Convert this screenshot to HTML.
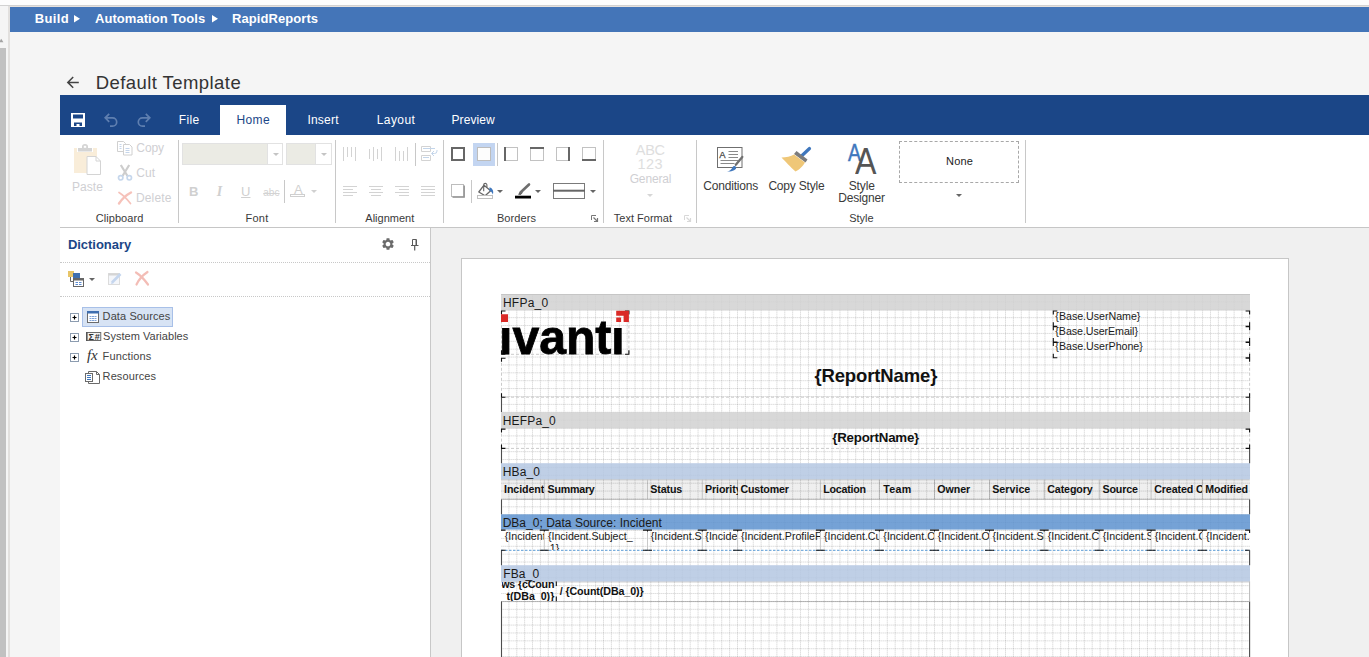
<!DOCTYPE html>
<html lang="en">
<head>
<meta charset="utf-8">
<title>Default Template</title>
<style>
html,body{margin:0;padding:0;}
body{width:1369px;height:657px;overflow:hidden;background:#f5f5f5;position:relative;
  font-family:"Liberation Sans",Arial,sans-serif;font-size:12px;color:#444;}
.a{position:absolute;}
.t{position:absolute;white-space:nowrap;line-height:1;}
svg{position:absolute;overflow:visible;}
/* top chrome */
#topwhite{left:0;top:0;width:1369px;height:5px;background:#fdfdfd;}
#topline{left:0;top:5px;width:1369px;height:1px;background:#d2d2d2;}
#topline2{left:10px;top:6px;width:1359px;height:1px;background:#e6e1dd;}
#leftbar{left:0;top:6px;width:8px;height:651px;background:#f5f5f5;}
#leftline{left:8px;top:6px;width:2px;height:651px;background:#e2e0de;}
#thumb{left:0;top:48px;width:6px;height:609px;background:#c1c1c1;}
#crumb{left:10px;top:7px;width:1359px;height:25px;background:#4475b8;}
.cr{top:12px;font-weight:bold;font-size:13px;color:#fff;}
/* title */
#title{left:96px;top:73px;font-size:18px;color:#333;}
/* ribbon */
#rib{left:60px;top:95px;width:1309px;height:40px;background:#1b4687;}
#ribbody{left:60px;top:135px;width:1309px;height:92px;background:#fff;}
#ribline{left:60px;top:227px;width:1309px;height:1px;background:#c6c6c6;}
#hometab{left:220px;top:105px;width:66px;height:30px;background:#fff;}
.tab{top:113px;font-size:12px;color:#fff;}
.sep{width:1px;background:#c8c8c8;top:140px;height:83px;}
.gl{top:212px;font-size:12px;color:#444;}
.dis{color:#bdbdbd;}
.arr{width:0;height:0;border:3px solid transparent;border-top:3px solid #666;border-bottom:none;}
/* left panel */
#panel{left:60px;top:228px;width:370px;height:429px;background:#fff;}
#panelr{left:430px;top:228px;width:1px;height:429px;background:#c8c8c8;}
#design{left:431px;top:228px;width:938px;height:429px;background:#f0f0f0;}
#page{left:461px;top:258px;width:826px;height:410px;background:#fff;border:1px solid #c6c6c6;}
.dot{height:0;border-top:1px dotted #c8c8c8;left:60px;width:370px;}
.tree{font-size:11px;color:#444;}
</style>
</head>
<body>
<div class="a" id="topwhite"></div>
<div class="a" id="topline"></div>
<div class="a" id="leftbar"></div>
<div class="a" id="leftline"></div>
<div class="a" id="topline2"></div>
<div class="a" id="thumb"></div>
<div class="a" id="crumb"></div>



<svg style="left:0;top:0" width="240" height="95" viewBox="0 0 240 95">
 <path d="M74 15v7.600l6-3.800zM212 15v7.600l6-3.800z" fill="#fff"/>
 <path d="M-1 42.200 1.200 38.800 3.400 42.200z" fill="#a3a3a3"/>
 <path d="M78.800 82.400H68M73.200 77 67.800 82.400 73.200 87.800" fill="none" stroke="#444" stroke-width="1.500"/>
</svg>
<div class="a" id="rib"></div>
<div class="a" id="ribbody"></div>
<div class="a" id="ribline"></div>
<div class="a" id="hometab"></div>

<!-- ribbon quick icons -->
<svg style="left:70px;top:112px" width="16" height="16" viewBox="0 0 16 16"><path d="M1 1h14v14H1z M3 2.5v4h10v-4z M4 10.5v3.5h2.5v-2h3v2H12v-3.500z" fill="#fff" fill-rule="evenodd"/></svg>
<svg style="left:103px;top:112px" width="16" height="16" viewBox="0 0 16 16" fill="none" stroke="#5f7fb0" stroke-width="1.7"><path d="M6.200 1.800 2.200 5.800l4 4M2.500 5.800h7a4.200 4.200 0 0 1 0 8.400h-2.500"/></svg>
<svg style="left:136px;top:112px" width="16" height="16" viewBox="0 0 16 16" fill="none" stroke="#5f7fb0" stroke-width="1.7"><path d="M9.800 1.800l4 4-4 4M13.500 5.800h-7a4.200 4.200 0 0 0 0 8.400h2.500"/></svg>

<!-- Clipboard group -->
<svg style="left:73px;top:144px" width="29" height="32" viewBox="0 0 29 32">
 <rect x="1" y="4" width="23" height="25" fill="#f9edd9"/>
 <rect x="4" y="3" width="16" height="5" fill="#fff"/>
 <path d="M5 4h4v-1.500a3 2.500 0 0 1 6 0V4h4v3.500H5z" fill="#d4d4d4"/><rect x="10.800" y="1.800" width="2.400" height="2" fill="#fff"/>
 <path d="M14 12.500h9l4.500 4.500v13.500H14z" fill="#fff" stroke="#d4d4d4"/>
 <path d="M23 12.500v4.500h4.500" fill="none" stroke="#d4d4d4"/>
</svg>
<svg style="left:117px;top:140px" width="16" height="16" viewBox="0 0 16 16" fill="#fff" stroke="#d0d0d0">
 <path d="M.5 1.500h6l2 2v8h-8z"/><path d="M6.500 4.500h6l2.500 2.500v8h-8.500z"/>
 <path d="M8.500 8.500h4M8.500 10.500h4M8.500 12.500h4M2.500 4.500h2M2.500 6.500h2M2.500 8.500h2" stroke="#c5d5ea"/>
</svg>
<svg style="left:117px;top:164px" width="16" height="17" viewBox="0 0 16 17" fill="none">
 <path d="M3.800 1l6.700 11M12.200 1 5.500 12" stroke="#cdcdcd" stroke-width="2.200"/>
 <circle cx="3.700" cy="13.800" r="2.200" stroke="#c6d7ec" stroke-width="1.700"/><circle cx="12.300" cy="13.800" r="2.200" stroke="#c6d7ec" stroke-width="1.700"/>
</svg>
<svg style="left:117px;top:191px" width="16" height="14" viewBox="0 0 16 14" fill="none" stroke="#f6c2ba" stroke-linecap="round">
 <path d="M2 1.500C6 4 10 8 13.500 12.500" stroke-width="1.700"/><path d="M14 1.500C9 4 5 8 2 12.500" stroke-width="2.400"/>
</svg>
<div class="a sep" style="left:178px"></div>

<!-- Font group -->
<div class="a" style="left:182px;top:143px;width:101px;height:22px;background:#ebebe4;border:1px solid #e2e2e2;box-sizing:border-box"></div>
<div class="a" style="left:267px;top:144px;width:14px;height:20px;background:#fff;border-left:1px solid #e2e2e2"></div>
<div class="a" style="left:286px;top:143px;width:46px;height:22px;background:#ebebe4;border:1px solid #e2e2e2;box-sizing:border-box"></div>
<div class="a" style="left:315px;top:144px;width:15px;height:20px;background:#fff;border-left:1px solid #e2e2e2"></div>
<div class="a arr" style="left:273px;top:153px;border-top-color:#c4c4c4"></div>
<div class="a arr" style="left:321px;top:153px;border-top-color:#c4c4c4"></div>
<div class="a" style="left:284px;top:180px;width:1px;height:23px;background:#c8c8c8"></div>
<div class="a" style="left:290px;top:194px;width:15px;height:3px;border:1px solid #cfcfcf;box-sizing:border-box;background:#fff"></div>
<div class="a arr" style="left:311px;top:190px;border-top-color:#d0d0d0"></div>
<div class="a sep" style="left:335px"></div>

<!-- Alignment group -->
<svg style="left:343px;top:147px" width="96" height="15" viewBox="0 0 96 15" stroke="#d3d3d3" fill="none">
 <path d="M.5 0v14M4.500 0v10M8.500 0v10M12.500 0v14"/>
 <path d="M26.500 2v10M30.500 0v14M34.500 2v10M38.500 0v14"/>
 <path d="M52.500 0v14M56.500 4v10M60.500 4v10M64.500 0v14"/>
</svg>
<div class="a" style="left:415px;top:143px;width:1px;height:23px;background:#c8c8c8"></div>
<svg style="left:421px;top:145px" width="17" height="17" viewBox="0 0 17 17" fill="none">
 <path d="M.500 1.500h9v5h-9zM.500 10.500h9v5h-9z" stroke="#d3d3d3"/>
 <path d="M2 3.500h12M2 12.500h6M11 8.500h2.500a2.500 2.500 0 0 0 2.500-2.500V5M13 6l-2.500 2.500L13 11" stroke="#c3d5ea"/>
</svg>
<svg style="left:343px;top:186px" width="96" height="11" viewBox="0 0 96 11" stroke="#d3d3d3" fill="none">
 <path d="M0 .5h14M0 3.500h10M0 6.500h14M0 9.500h10"/>
 <path d="M26 .5h14M28 3.500h10M26 6.500h14M28 9.500h10"/>
 <path d="M52 .5h14M56 3.500h10M52 6.500h14M56 9.500h10"/>
 <path d="M78 .5h14M78 3.500h14M78 6.500h14M78 9.500h14"/>
</svg>
<div class="a sep" style="left:443px"></div>

<!-- Borders group -->
<div class="a" style="left:473px;top:143px;width:22px;height:23px;background:#c3d5f1"></div>
<svg style="left:451px;top:147px" width="146" height="15" viewBox="0 0 146 15" fill="#fff">
 <rect x="1" y="1" width="12" height="12" stroke="#676767" stroke-width="2"/>
 <rect x="26.500" y=".5" width="13" height="13" stroke="#bdbdbd" fill="#fdfdfd"/>
 <rect x="53.500" y=".5" width="13" height="13" stroke="#c2c2c2"/><path d="M54 0v14" stroke="#676767" stroke-width="2"/>
 <rect x="79.500" y=".5" width="13" height="13" stroke="#c2c2c2"/><path d="M79 1h14" stroke="#676767" stroke-width="2"/>
 <rect x="105.500" y=".5" width="13" height="13" stroke="#c2c2c2"/><path d="M118 0v14" stroke="#676767" stroke-width="2"/>
 <rect x="131.500" y=".5" width="13" height="13" stroke="#c2c2c2"/><path d="M131 13h14" stroke="#676767" stroke-width="2"/>
</svg>
<div class="a" style="left:497px;top:143px;width:1px;height:23px;background:#c8c8c8"></div>
<svg style="left:451px;top:184px" width="15" height="15" viewBox="0 0 15 15"><rect x=".5" y=".5" width="12" height="12" fill="#fff" stroke="#bdbdbd"/><path d="M13.200 1.500v11.700H1.500" fill="none" stroke="#8a8a8a" stroke-width="1.300"/></svg>
<div class="a" style="left:471px;top:180px;width:1px;height:23px;background:#c8c8c8"></div>
<svg style="left:477px;top:183px" width="17" height="16" viewBox="0 0 17 16" fill="none">
 <path d="M7 2.200 1.800 9l6.300 3.800 5.600-5z" fill="#fff" stroke="#666" stroke-width="1.300" stroke-linejoin="round"/>
 <path d="M6.700 8.300V2a1.600 1.600 0 0 1 3.200 0v2.200" stroke="#666" stroke-width="1.100"/>
 <path d="M12.600 4.300c3 1 4.400 4 3.300 7.300-.7-2-1.900-3.300-3.700-4.100z" fill="#3f77bd"/>
 <rect x=".5" y="12.500" width="15" height="3" fill="#fff" stroke="#c0c0c0"/>
</svg>
<div class="a arr" style="left:497px;top:190px"></div>
<svg style="left:515px;top:183px" width="17" height="16" viewBox="0 0 17 16" fill="none">
 <path d="M3 11.500 5 9l3 .5L5.500 12z" fill="#555"/><path d="M5.500 9.500 14 1.500" stroke="#6e6e6e" stroke-width="2.600" stroke-linecap="round"/>
 <rect x="0" y="12.700" width="16" height="2.800" fill="#000"/>
</svg>
<div class="a arr" style="left:535px;top:190px"></div>
<svg style="left:553px;top:183px" width="33" height="16" viewBox="0 0 33 16" fill="none"><rect x=".5" y=".5" width="31" height="15" fill="#fff" stroke="#7a7a7a"/><path d="M0 7.700h32" stroke="#666" stroke-width="2"/></svg>
<div class="a arr" style="left:590px;top:190px"></div>
<svg style="left:591px;top:215px" width="8" height="8" viewBox="0 0 8 8" fill="none" stroke="#777"><path d="M.5 5V.5H5"/><path d="M2.500 2.500 6.500 6.500M6.500 3v3.500H3" stroke-width="1.200"/></svg>
<div class="a sep" style="left:603px"></div>
<!-- Text format group -->
<div class="a arr" style="left:647px;top:194px;border-top-color:#d6d6d6"></div>
<svg style="left:684px;top:215px" width="8" height="8" viewBox="0 0 8 8" fill="none" stroke="#d8d8d8"><path d="M.5 5V.5H5"/><path d="M2.500 2.500 6.500 6.500M6.500 3v3.500H3" stroke-width="1.200"/></svg>
<div class="a sep" style="left:696px"></div>
<!-- Style group -->
<svg style="left:717px;top:147px" width="30" height="26" viewBox="0 0 30 26" fill="none">
 <rect x=".5" y=".5" width="24.500" height="20" fill="#fff" stroke="#6f6f6f"/>
 <path d="M11.500 4.500h9.500M11.500 7.500h9.500M11.500 10.500h9.500M3.500 13.500h17.500M3.500 16.500h14" stroke="#8a8a8a"/>
 <text x="2.300" y="10.800" font-family="'Liberation Sans',Arial,sans-serif" font-size="9.500" fill="#444" stroke="#444" stroke-width=".25">A</text>
 <path d="M18.800 17.800 25.300 10" stroke="#707070" stroke-width="2.300" stroke-linecap="round"/>
 <path d="M10 24.500c3-.5 4.500-2 5.500-4.200 1-1.600 2.600-1.600 3.400-.6.800 1.200 0 2.800-1.800 3.600-2 .9-4.600 1.500-7.100 1.200z" fill="#3f77bd"/>
</svg>
<svg style="left:781px;top:147px" width="31" height="26" viewBox="0 0 31 26">
 <path d="M20 9.500 28.500 1.500" stroke="#3f77bd" stroke-width="3.200" stroke-linecap="round" fill="none"/>
 <path d="M15.500 4 26.500 12.500 24.500 15.500 13 7z" fill="#7c7c7c"/>
 <path d="M13 7.500 24 15.500C22 19 18 23 14.500 24.500 9.500 20 4 14 .5 10.500 5 10.500 10 9.500 13 7.500z" fill="#efc778"/>
</svg>
<div class="a" style="left:899px;top:141px;width:120px;height:42px;box-sizing:border-box;border:1px dashed #a8a8a8"></div>
<div class="a arr" style="left:956px;top:194px"></div>
<div class="a sep" style="left:1025px"></div>

<!-- Dictionary panel -->
<div class="a" id="panel"></div>
<div class="a" id="panelr"></div>
<div class="a dot" style="top:262px"></div>
<div class="a dot" style="top:296px"></div>
<svg style="left:380.500px;top:237.300px" width="14" height="14" viewBox="0 0 24 24"><path fill="#6b6b6b" d="M19.430 12.980c.04-.32.070-.64.070-.98s-.030-.66-.070-.98l2.110-1.650c.19-.15.240-.42.120-.64l-2-3.460c-.12-.22-.39-.3-.61-.22l-2.490 1c-.52-.4-1.080-.73-1.690-.98l-.38-2.650C14.460 2.180 14.250 2 14 2h-4c-.25 0-.46.180-.49.420l-.38 2.650c-.61.250-1.170.59-1.690.98l-2.490-1c-.23-.09-.49 0-.61.220l-2 3.460c-.13.220-.07.490.12.640l2.110 1.650c-.04.320-.07.650-.07.980s.03.660.07.980l-2.110 1.650c-.19.150-.24.420-.12.640l2 3.460c.12.220.39.300.61.220l2.490-1c.52.400 1.080.73 1.690.98l.38 2.650c.03.240.24.420.49.420h4c.25 0 .46-.18.490-.42l.38-2.650c.61-.25 1.170-.59 1.690-.98l2.490 1c.23.090.49 0 .61-.22l2-3.460c.12-.22.070-.49-.12-.64l-2.110-1.650zM12 16c-2.210 0-4-1.790-4-4s1.790-4 4-4 4 1.790 4 4-1.790 4-4 4z"/></svg>
<svg style="left:411px;top:239px" width="8" height="12" viewBox="0 0 8 12" fill="none" stroke="#5a5a5a"><path d="M1.500 6V.5h4V6M5 1v5" /><path d="M0 6.500h7.500M3.700 7v4.500" stroke-width="1.200"/></svg>
<!-- panel toolbar -->
<svg style="left:68px;top:271px" width="17" height="16" viewBox="0 0 17 16">
 <rect x="0" y="0" width="6" height="6" fill="#e8c568"/>
 <rect x="5" y="2" width="7" height="6" fill="#3f6fb0"/>
 <path d="M2.500 6v4.500h3" fill="none" stroke="#666"/>
 <rect x="5.500" y="7.500" width="10" height="8" fill="#fff" stroke="#666"/><rect x="5.500" y="7.500" width="10" height="2" fill="#666"/>
 <path d="M7.500 11.500h2.500M11 11.500h2.500M7.500 13.500h2.500M11 13.500h2.500" stroke="#5b8ad0"/>
</svg>
<div class="a arr" style="left:89px;top:278px"></div>
<svg style="left:108px;top:272px" width="15" height="14" viewBox="0 0 15 14" fill="none">
 <rect x=".5" y="1.500" width="11" height="11" fill="#f4f6fa" stroke="#dcdcdc"/><path d="M.5 2.500h11" stroke="#d5d5d5" stroke-width="2"/>
 <path d="M4 10.500 12.500 2" stroke="#c5d6ee" stroke-width="2.600"/><path d="M3 12l.8-2.500 1.700 1.700z" fill="#c5d6ee"/>
</svg>
<svg style="left:134px;top:271px" width="16" height="15" viewBox="0 0 16 15" fill="none" stroke="#f3bdb6" stroke-width="2.200" stroke-linecap="round"><path d="M2 1.500C6 4 10 8 14 13.500M13.500 1C9 4 5 8 2.500 13.500"/></svg>
<!-- tree -->
<div class="a" style="left:82px;top:307px;width:91px;height:20px;box-sizing:border-box;background:#d7e3f4;border:1px solid #a8c0e8"></div>
<svg style="left:70px;top:313px" width="10" height="50" viewBox="0 0 10 50" fill="#fff">
 <g stroke="#8c9cb0"><rect x=".5" y=".5" width="8" height="8"/><rect x=".5" y="20.500" width="8" height="8"/><rect x=".5" y="40.500" width="8" height="8"/></g>
 <path d="M2.500 4.500h4M4.500 2.500v4M2.500 24.500h4M4.500 22.500v4M2.500 44.500h4M4.500 42.500v4" stroke="#000" stroke-width="1.200"/>
</svg>
<svg style="left:87px;top:311px" width="12" height="12" viewBox="0 0 12 12"><rect x=".5" y=".5" width="11" height="11" fill="#fff" stroke="#6b6b6b"/><rect x="0" y="0" width="12" height="2.500" fill="#3f6fb0"/><path d="M2.500 5.500h2M5 5.500h2M7.500 5.500h2M2.500 7.500h2M5 7.500h2M7.500 7.500h2M2.500 9.500h2M5 9.500h2M7.500 9.500h2" stroke="#7fa3d8"/></svg>
<svg style="left:86px;top:332px" width="15" height="9" viewBox="0 0 15 9"><rect x=".75" y=".5" width="14" height="8" fill="#f2f2f2" stroke="#6b6b6b"/><path d="M.75 0v9" stroke="#555" stroke-width="1.500"/></svg>
<svg style="left:85px;top:369px" width="15" height="15" viewBox="0 0 15 15" fill="#fff" stroke="#6b6b6b"><path d="M3.500 2.500h8l3 3v9h-11z"/><path d="M11.500 2.500v3h3" fill="none"/><rect x=".5" y="4.500" width="7" height="8"/><path d="M2 6.500h4M2 8.500h4M2 10.500h4" stroke="#3f77bd"/></svg>

<div class="a" id="design"></div>
<div class="a" id="page"></div>
<svg style="left:0;top:0" width="1369" height="657" viewBox="0 0 1369 657"><rect x="501.00" y="479.30" width="749.00" height="20.10" fill="#efefef" /><path d="M544.3 479.3V499.4M647.5 479.3V499.4M702.3 479.3V499.4M737.6 479.3V499.4M820.4 479.3V499.4M879.4 479.3V499.4M934.5 479.3V499.4M989.5 479.3V499.4M1044.2 479.3V499.4M1099.2 479.3V499.4M1151.1 479.3V499.4M1202.4 479.3V499.4M501.0 499.4H1250.0M501.0 479.8H1249.6" stroke="#c4c4c4" fill="none"/><path d="M501.0 581.9H1249.6M501.0 601.6H1249.6" stroke="#c4c4c4" fill="none"/></svg>
<svg style="left:501px;top:294.300px" width="749" height="363" viewBox="0 0 749 363"><path d="M7.88 0V363M15.77 0V363M23.65 0V363M31.53 0V363M39.41 0V363M47.30 0V363M55.18 0V363M63.06 0V363M70.95 0V363M78.83 0V363M86.71 0V363M94.60 0V363M102.48 0V363M110.36 0V363M118.25 0V363M126.13 0V363M134.01 0V363M141.89 0V363M149.78 0V363M157.66 0V363M165.54 0V363M173.43 0V363M181.31 0V363M189.19 0V363M197.07 0V363M204.96 0V363M212.84 0V363M220.72 0V363M228.61 0V363M236.49 0V363M244.37 0V363M252.26 0V363M260.14 0V363M268.02 0V363M275.90 0V363M283.79 0V363M291.67 0V363M299.55 0V363M307.44 0V363M315.32 0V363M323.20 0V363M331.09 0V363M338.97 0V363M346.85 0V363M354.74 0V363M362.62 0V363M370.50 0V363M378.38 0V363M386.27 0V363M394.15 0V363M402.03 0V363M409.92 0V363M417.80 0V363M425.68 0V363M433.56 0V363M441.45 0V363M449.33 0V363M457.21 0V363M465.10 0V363M472.98 0V363M480.86 0V363M488.75 0V363M496.63 0V363M504.51 0V363M512.39 0V363M520.28 0V363M528.16 0V363M536.04 0V363M543.93 0V363M551.81 0V363M559.69 0V363M567.58 0V363M575.46 0V363M583.34 0V363M591.23 0V363M599.11 0V363M606.99 0V363M614.87 0V363M622.76 0V363M630.64 0V363M638.52 0V363M646.41 0V363M654.29 0V363M662.17 0V363M670.05 0V363M677.94 0V363M685.82 0V363M693.70 0V363M701.59 0V363M709.47 0V363M717.35 0V363M725.24 0V363M733.12 0V363M741.00 0V363M0 7.88H749M0 15.77H749M0 23.65H749M0 31.53H749M0 39.41H749M0 47.30H749M0 55.18H749M0 63.06H749M0 70.95H749M0 78.83H749M0 86.71H749M0 94.60H749M0 102.48H749M0 110.36H749M0 118.25H749M0 126.13H749M0 134.01H749M0 141.89H749M0 149.78H749M0 157.66H749M0 165.54H749M0 173.43H749M0 181.31H749M0 189.19H749M0 197.07H749M0 204.96H749M0 212.84H749M0 220.72H749M0 228.61H749M0 236.49H749M0 244.37H749M0 252.26H749M0 260.14H749M0 268.02H749M0 275.90H749M0 283.79H749M0 291.67H749M0 299.55H749M0 307.44H749M0 315.32H749M0 323.20H749M0 331.09H749M0 338.97H749M0 346.85H749M0 354.74H749M0 362.62H749" fill="none" stroke="#000" stroke-opacity="0.075" stroke-width="1"/><path d="M7.88 0V363M15.77 0V363M23.65 0V363M31.53 0V363M39.41 0V363M47.30 0V363M55.18 0V363M63.06 0V363M70.95 0V363M78.83 0V363M86.71 0V363M94.60 0V363M102.48 0V363M110.36 0V363M118.25 0V363M126.13 0V363M134.01 0V363M141.89 0V363M149.78 0V363M157.66 0V363M165.54 0V363M173.43 0V363M181.31 0V363M189.19 0V363M197.07 0V363M204.96 0V363M212.84 0V363M220.72 0V363M228.61 0V363M236.49 0V363M244.37 0V363M252.26 0V363M260.14 0V363M268.02 0V363M275.90 0V363M283.79 0V363M291.67 0V363M299.55 0V363M307.44 0V363M315.32 0V363M323.20 0V363M331.09 0V363M338.97 0V363M346.85 0V363M354.74 0V363M362.62 0V363M370.50 0V363M378.38 0V363M386.27 0V363M394.15 0V363M402.03 0V363M409.92 0V363M417.80 0V363M425.68 0V363M433.56 0V363M441.45 0V363M449.33 0V363M457.21 0V363M465.10 0V363M472.98 0V363M480.86 0V363M488.75 0V363M496.63 0V363M504.51 0V363M512.39 0V363M520.28 0V363M528.16 0V363M536.04 0V363M543.93 0V363M551.81 0V363M559.69 0V363M567.58 0V363M575.46 0V363M583.34 0V363M591.23 0V363M599.11 0V363M606.99 0V363M614.87 0V363M622.76 0V363M630.64 0V363M638.52 0V363M646.41 0V363M654.29 0V363M662.17 0V363M670.05 0V363M677.94 0V363M685.82 0V363M693.70 0V363M701.59 0V363M709.47 0V363M717.35 0V363M725.24 0V363M733.12 0V363M741.00 0V363M0 7.88H749M0 15.77H749M0 23.65H749M0 31.53H749M0 39.41H749M0 47.30H749M0 55.18H749M0 63.06H749M0 70.95H749M0 78.83H749M0 86.71H749M0 94.60H749M0 102.48H749M0 110.36H749M0 118.25H749M0 126.13H749M0 134.01H749M0 141.89H749M0 149.78H749M0 157.66H749M0 165.54H749M0 173.43H749M0 181.31H749M0 189.19H749M0 197.07H749M0 204.96H749M0 212.84H749M0 220.72H749M0 228.61H749M0 236.49H749M0 244.37H749M0 252.26H749M0 260.14H749M0 268.02H749M0 275.90H749M0 283.79H749M0 291.67H749M0 299.55H749M0 307.44H749M0 315.32H749M0 323.20H749M0 331.09H749M0 338.97H749M0 346.85H749M0 354.74H749M0 362.62H749" fill="none" stroke="#000" stroke-opacity="0.06" stroke-width="1" stroke-dasharray="1 1"/></svg>
<svg style="left:0;top:0" width="1369" height="657" viewBox="0 0 1369 657"><rect x="501.00" y="294.00" width="749.00" height="16.50" fill="#d1d1d1" fill-opacity="0.85"/><rect x="501.00" y="412.10" width="749.00" height="16.50" fill="#d1d1d1" fill-opacity="0.85"/><rect x="501.00" y="463.20" width="749.00" height="16.10" fill="#b4c7e2" fill-opacity="0.85"/><rect x="501.00" y="514.30" width="749.00" height="15.30" fill="#5d92cf" fill-opacity="0.85"/><rect x="501.00" y="565.20" width="749.00" height="16.20" fill="#b4c7e2" fill-opacity="0.85"/><path d="M501.0 294.5H1250.0" stroke="#c6c6c6"/><path d="M501.5 397.2V412.1M501.5 448.4V463.2M501.5 499.4V514.3M501.5 550.3V565.2M501.5 601.6V657M1249.6 397.2V412.1M1249.6 448.4V463.2M1249.6 499.4V514.3M1249.6 550.3V565.2M1249.6 601.6V657" stroke="#4d4d4d" stroke-width="1.100" fill="none"/><path d="M1249.6 581.4V601.6" stroke="#b9b9b9" fill="none"/><path d="M501.5 310.5V354.3M628.9 310.5V354.3M501 354.3H628.9M501.5 357.8V397.2M1249.6 357.8V397.2M501 397.2H1249.6M1249.6 310.5V326.3M1249.6 326.3V342.0M1249.6 342.0V357.8M501.5 428.6V448.4M1249.6 428.6V448.4M501 448.4H1249.6" stroke="#cbcbcb" stroke-dasharray="3 2" fill="none"/><path d="M544.3 529.6V550.3M647.5 529.6V550.3M702.3 529.6V550.3M737.6 529.6V550.3M820.4 529.6V550.3M879.4 529.6V550.3M934.5 529.6V550.3M989.5 529.6V550.3M1044.2 529.6V550.3M1099.2 529.6V550.3M1151.1 529.6V550.3M1202.4 529.6V550.3" stroke="#c9c9c9" fill="none"/><path d="M501.0 550.3H1249.6" stroke="#5b9bd5" stroke-dasharray="2.500 1.500" fill="none"/><path d="M501.5 314.5V311.0H505.5M624.9 311.0H628.9V314.5M501.5 350.3V354.3H505.5M624.9 354.3H628.9V350.3M501.5 361.8V358.3H505.5M1245.6 358.3H1249.6V361.8M501.5 393.2V397.2H505.5M1245.6 397.2H1249.6V393.2M1053.3 314.5V311.0H1057.3M1245.6 311.0H1249.6V314.5M1053.3 322.3V326.3H1057.3M1245.6 326.3H1249.6V322.3M1053.3 330.3V326.8H1057.3M1245.6 326.8H1249.6V330.3M1053.3 338.0V342.0H1057.3M1245.6 342.0H1249.6V338.0M1053.3 346.0V342.5H1057.3M1245.6 342.5H1249.6V346.0M1053.3 353.8V357.8H1057.3M1245.6 357.8H1249.6V353.8M501.5 432.6V429.1H505.5M1245.6 429.1H1249.6V432.6M501.5 444.4V448.4H505.5M1245.6 448.4H1249.6V444.4M539.8 530.1H548.8M539.8 550.3H548.8M544.3 529.6V531.5M643.0 530.1H652.0M643.0 550.3H652.0M647.5 529.6V531.5M697.8 530.1H706.8M697.8 550.3H706.8M702.3 529.6V531.5M733.1 530.1H742.1M733.1 550.3H742.1M737.6 529.6V531.5M815.9 530.1H824.9M815.9 550.3H824.9M820.4 529.6V531.5M874.9 530.1H883.9M874.9 550.3H883.9M879.4 529.6V531.5M930.0 530.1H939.0M930.0 550.3H939.0M934.5 529.6V531.5M985.0 530.1H994.0M985.0 550.3H994.0M989.5 529.6V531.5M1039.7 530.1H1048.7M1039.7 550.3H1048.7M1044.2 529.6V531.5M1094.7 530.1H1103.7M1094.7 550.3H1103.7M1099.2 529.6V531.5M1146.6 530.1H1155.6M1146.6 550.3H1155.6M1151.1 529.6V531.5M1197.9 530.1H1206.9M1197.9 550.3H1206.9M1202.4 529.6V531.5M501.0 530.1H505.5M501.0 550.3H505.5M1245.1 530.1H1249.6V533M1245.1 550.3H1249.6M556.3 581.4V586M556.3 596.6V601.3" stroke="#111" stroke-width="1.100" fill="none"/></svg>
<div class="t" style="left:34.79px;top:12.00px;font-size:13px;color:#fff;font-weight:bold;letter-spacing:0.338px;">Build</div>
<div class="t" style="left:95.10px;top:12.00px;font-size:13px;color:#fff;font-weight:bold;letter-spacing:0.034px;">Automation Tools</div>
<div class="t" style="left:231.99px;top:12.00px;font-size:13px;color:#fff;font-weight:bold;letter-spacing:0.074px;">RapidReports</div>
<div class="t" style="left:95.65px;top:74.00px;font-size:18.5px;color:#333;letter-spacing:0.438px;">Default Template</div>
<div class="t" style="left:178.75px;top:114.00px;font-size:12px;color:#fff;letter-spacing:0.346px;">File</div>
<div class="t" style="left:236.45px;top:114.00px;font-size:12px;color:#1b4687;letter-spacing:0.421px;">Home</div>
<div class="t" style="left:307.40px;top:114.00px;font-size:12px;color:#fff;letter-spacing:0.234px;">Insert</div>
<div class="t" style="left:376.75px;top:114.00px;font-size:12px;color:#fff;letter-spacing:0.401px;">Layout</div>
<div class="t" style="left:451.55px;top:114.00px;font-size:12px;color:#fff;letter-spacing:0.073px;">Preview</div>
<div class="t" style="left:72.05px;top:181.00px;font-size:12px;color:#cfcfd3;letter-spacing:0.022px;">Paste</div>
<div class="t" style="left:136.30px;top:142.00px;font-size:12px;color:#cfcfd3;letter-spacing:-0.071px;">Copy</div>
<div class="t" style="left:136.30px;top:167.00px;font-size:12px;color:#cfcfd3;letter-spacing:0.055px;">Cut</div>
<div class="t" style="left:135.95px;top:192.00px;font-size:12px;color:#cfcfd3;letter-spacing:0.157px;">Delete</div>
<div class="t" style="left:95.65px;top:213.00px;font-size:11px;color:#3a3a3a;letter-spacing:0.079px;">Clipboard</div>
<div class="t" style="left:245.40px;top:213.00px;font-size:11px;color:#3a3a3a;letter-spacing:0.315px;">Font</div>
<div class="t" style="left:365.30px;top:213.00px;font-size:11px;color:#3a3a3a;letter-spacing:0.005px;">Alignment</div>
<div class="t" style="left:496.90px;top:213.00px;font-size:11px;color:#3a3a3a;letter-spacing:0.106px;">Borders</div>
<div class="t" style="left:613.80px;top:213.00px;font-size:11px;color:#3a3a3a;letter-spacing:0.009px;">Text Format</div>
<div class="t" style="left:849.15px;top:213.00px;font-size:11px;color:#3a3a3a;letter-spacing:-0.009px;">Style</div>
<div class="t" style="left:189.09px;top:185.00px;font-size:13px;color:#d0d0d0;font-weight:bold;">B</div>
<div class="t" style="left:216.82px;top:185.00px;font-size:14px;color:#d0d0d0;font-weight:bold;font-family:'Liberation Serif',serif;font-style:italic;">I</div>
<div class="t" style="left:241.09px;top:185.00px;font-size:13px;color:#d0d0d0;text-decoration:underline;text-underline-offset:1px;">U</div>
<div class="t" style="left:263.20px;top:188.00px;font-size:10px;color:#d3d3d3;letter-spacing:0.113px;text-decoration:line-through;">abc</div>
<div class="t" style="left:293.90px;top:183.00px;font-size:13px;color:#d0d0d0;">A</div>
<div class="t" style="left:635.70px;top:143.00px;font-size:14.5px;color:#dedede;letter-spacing:-0.206px;">ABC</div>
<div class="t" style="left:637.59px;top:157.00px;font-size:14.5px;color:#dedede;letter-spacing:0.451px;">123</div>
<div class="t" style="left:629.70px;top:173.00px;font-size:12px;color:#cfcfd3;letter-spacing:-0.154px;">General</div>
<div class="t" style="left:703.30px;top:180.00px;font-size:12px;color:#3a3a3a;letter-spacing:-0.189px;">Conditions</div>
<div class="t" style="left:768.40px;top:180.00px;font-size:12px;color:#3a3a3a;letter-spacing:-0.189px;">Copy Style</div>
<div class="t" style="left:848.70px;top:180.00px;font-size:12px;color:#3a3a3a;letter-spacing:-0.088px;">Style</div>
<div class="t" style="left:838.15px;top:192.00px;font-size:12px;color:#3a3a3a;letter-spacing:-0.154px;">Designer</div>
<div class="t" style="left:946.10px;top:156.00px;font-size:11px;color:#222;letter-spacing:0.124px;">None</div>
<div class="t" style="left:847.90px;top:141.00px;font-size:24px;color:#3f77bd;-webkit-text-stroke:0.5px #3f77bd;transform:scaleX(0.806);transform-origin:0 0;">A</div>
<div class="t" style="left:854.80px;top:144.00px;font-size:36px;color:#555;transform:scaleX(0.893);transform-origin:0 0;">A</div>
<div class="t" style="left:67.89px;top:238.00px;font-size:13px;color:#1b4687;font-weight:bold;letter-spacing:-0.027px;">Dictionary</div>
<div class="t" style="left:102.60px;top:311.00px;font-size:11px;color:#444;letter-spacing:0.100px;">Data Sources</div>
<div class="t" style="left:103.05px;top:331.00px;font-size:11px;color:#444;letter-spacing:0.029px;">System Variables</div>
<div class="t" style="left:102.60px;top:351.00px;font-size:11px;color:#444;letter-spacing:0.133px;">Functions</div>
<div class="t" style="left:102.60px;top:371.00px;font-size:11px;color:#444;letter-spacing:0.109px;">Resources</div>
<div class="t" style="left:86.90px;top:348.00px;font-size:15px;color:#333;font-family:'Liberation Serif',serif;font-style:italic;">fx</div>
<div class="t" style="left:502.95px;top:297.00px;font-size:12px;color:#1a1a1a;letter-spacing:0.250px;">HFPa_0</div>
<div class="t" style="left:502.75px;top:415.00px;font-size:12px;color:#1a1a1a;letter-spacing:0.158px;">HEFPa_0</div>
<div class="t" style="left:502.75px;top:466.00px;font-size:12px;color:#1a1a1a;letter-spacing:0.146px;">HBa_0</div>
<div class="t" style="left:502.65px;top:517.00px;font-size:12px;color:#1a1a1a;letter-spacing:0.018px;">DBa_0; Data Source: Incident</div>
<div class="t" style="left:503.15px;top:568.00px;font-size:12px;color:#1a1a1a;letter-spacing:0.155px;">FBa_0</div>
<div class="t" style="left:1055.35px;top:311.00px;font-size:10.67px;color:#1a1a1a;letter-spacing:-0.020px;">{Base.UserName}</div>
<div class="t" style="left:1055.35px;top:326.00px;font-size:10.67px;color:#1a1a1a;letter-spacing:-0.060px;">{Base.UserEmail}</div>
<div class="t" style="left:1055.35px;top:341.00px;font-size:10.67px;color:#1a1a1a;letter-spacing:-0.012px;">{Base.UserPhone}</div>
<div class="t" style="left:814.41px;top:367.00px;font-size:18.5px;color:#111;font-weight:bold;letter-spacing:-0.131px;">{ReportName}</div>
<div class="t" style="left:832.29px;top:431.00px;font-size:13.3px;color:#111;font-weight:bold;letter-spacing:-0.221px;">{ReportName}</div>
<div class="a" style="left:502px;top:479.3px;width:42.30px;height:20.10px;overflow:hidden"><div class="t" style="left:2.10px;top:4.70px;font-size:10.67px;color:#111;font-weight:bold;letter-spacing:-0.100px;">Incident</div></div>
<div class="a" style="left:545.3px;top:479.3px;width:102.20px;height:20.10px;overflow:hidden"><div class="t" style="left:2.30px;top:4.70px;font-size:10.67px;color:#111;font-weight:bold;letter-spacing:-0.232px;">Summary</div></div>
<div class="a" style="left:648.5px;top:479.3px;width:53.80px;height:20.10px;overflow:hidden"><div class="t" style="left:1.70px;top:4.70px;font-size:10.67px;color:#111;font-weight:bold;letter-spacing:-0.095px;">Status</div></div>
<div class="a" style="left:703.3px;top:479.3px;width:34.30px;height:20.10px;overflow:hidden"><div class="t" style="left:1.70px;top:4.70px;font-size:10.67px;color:#111;font-weight:bold;letter-spacing:-0.100px;">Priority</div></div>
<div class="a" style="left:738.6px;top:479.3px;width:81.80px;height:20.10px;overflow:hidden"><div class="t" style="left:1.90px;top:4.70px;font-size:10.67px;color:#111;font-weight:bold;letter-spacing:-0.207px;">Customer</div></div>
<div class="a" style="left:821.4px;top:479.3px;width:58.00px;height:20.10px;overflow:hidden"><div class="t" style="left:1.90px;top:4.70px;font-size:10.67px;color:#111;font-weight:bold;letter-spacing:-0.248px;">Location</div></div>
<div class="a" style="left:880.4px;top:479.3px;width:54.10px;height:20.10px;overflow:hidden"><div class="t" style="left:2.80px;top:4.70px;font-size:10.67px;color:#111;font-weight:bold;letter-spacing:0.352px;">Team</div></div>
<div class="a" style="left:935.5px;top:479.3px;width:54.00px;height:20.10px;overflow:hidden"><div class="t" style="left:1.70px;top:4.70px;font-size:10.67px;color:#111;font-weight:bold;letter-spacing:-0.037px;">Owner</div></div>
<div class="a" style="left:990.5px;top:479.3px;width:53.70px;height:20.10px;overflow:hidden"><div class="t" style="left:1.70px;top:4.70px;font-size:10.67px;color:#111;font-weight:bold;letter-spacing:0.028px;">Service</div></div>
<div class="a" style="left:1045.2px;top:479.3px;width:54.00px;height:20.10px;overflow:hidden"><div class="t" style="left:2.00px;top:4.70px;font-size:10.67px;color:#111;font-weight:bold;letter-spacing:-0.088px;">Category</div></div>
<div class="a" style="left:1100.2px;top:479.3px;width:50.90px;height:20.10px;overflow:hidden"><div class="t" style="left:2.20px;top:4.70px;font-size:10.67px;color:#111;font-weight:bold;letter-spacing:-0.107px;">Source</div></div>
<div class="a" style="left:1152.1px;top:479.3px;width:50.30px;height:20.10px;overflow:hidden"><div class="t" style="left:2.10px;top:4.70px;font-size:10.67px;color:#111;font-weight:bold;letter-spacing:-0.100px;">Created On</div></div>
<div class="a" style="left:1203.4px;top:479.3px;width:46.30px;height:20.10px;overflow:hidden"><div class="t" style="left:1.80px;top:4.70px;font-size:10.67px;color:#111;font-weight:bold;letter-spacing:-0.141px;">Modified</div></div>
<div class="a" style="left:502px;top:529.5px;width:41.80px;height:20.80px;overflow:hidden"><div class="t" style="left:2.75px;top:1.50px;font-size:10.67px;color:#1a1a1a;">{Incident.IncidentNumber}</div></div>
<div class="a" style="left:545.3px;top:529.5px;width:101.70px;height:20.80px;overflow:hidden"><div class="t" style="left:2.65px;top:1.50px;font-size:10.67px;color:#1a1a1a;letter-spacing:-0.040px;">{Incident.Subject_</div></div>
<div class="a" style="left:648.5px;top:529.5px;width:53.30px;height:20.80px;overflow:hidden"><div class="t" style="left:2.25px;top:1.50px;font-size:10.67px;color:#1a1a1a;">{Incident.Status}</div></div>
<div class="a" style="left:703.3px;top:529.5px;width:33.80px;height:20.80px;overflow:hidden"><div class="t" style="left:2.05px;top:1.50px;font-size:10.67px;color:#1a1a1a;">{Incident.Priority}</div></div>
<div class="a" style="left:738.6px;top:529.5px;width:81.30px;height:20.80px;overflow:hidden"><div class="t" style="left:2.35px;top:1.50px;font-size:10.67px;color:#1a1a1a;">{Incident.ProfileFullName}</div></div>
<div class="a" style="left:821.4px;top:529.5px;width:57.50px;height:20.80px;overflow:hidden"><div class="t" style="left:2.65px;top:1.50px;font-size:10.67px;color:#1a1a1a;">{Incident.CustomerLocation}</div></div>
<div class="a" style="left:880.4px;top:529.5px;width:53.60px;height:20.80px;overflow:hidden"><div class="t" style="left:2.95px;top:1.50px;font-size:10.67px;color:#1a1a1a;">{Incident.OwnerTeam}</div></div>
<div class="a" style="left:935.5px;top:529.5px;width:53.50px;height:20.80px;overflow:hidden"><div class="t" style="left:2.15px;top:1.50px;font-size:10.67px;color:#1a1a1a;">{Incident.Owner}</div></div>
<div class="a" style="left:990.5px;top:529.5px;width:53.20px;height:20.80px;overflow:hidden"><div class="t" style="left:2.05px;top:1.50px;font-size:10.67px;color:#1a1a1a;">{Incident.Service}</div></div>
<div class="a" style="left:1045.2px;top:529.5px;width:53.50px;height:20.80px;overflow:hidden"><div class="t" style="left:2.45px;top:1.50px;font-size:10.67px;color:#1a1a1a;">{Incident.Category}</div></div>
<div class="a" style="left:1100.2px;top:529.5px;width:50.40px;height:20.80px;overflow:hidden"><div class="t" style="left:2.55px;top:1.50px;font-size:10.67px;color:#1a1a1a;">{Incident.Source}</div></div>
<div class="a" style="left:1152.1px;top:529.5px;width:49.80px;height:20.80px;overflow:hidden"><div class="t" style="left:2.55px;top:1.50px;font-size:10.67px;color:#1a1a1a;">{Incident.CreatedDateTime}</div></div>
<div class="a" style="left:1203.4px;top:529.5px;width:45.80px;height:20.80px;overflow:hidden"><div class="t" style="left:2.55px;top:1.50px;font-size:10.67px;color:#1a1a1a;">{Incident.LastModDateTime}</div></div>
<div class="a" style="left:545.3px;top:529.5px;width:102.20px;height:20.80px;overflow:hidden"><div class="t" style="left:4.50px;top:13.50px;font-size:10.67px;color:#1a1a1a;">1}</div></div>
<div class="a" style="left:501.5px;top:581.4px;width:54.90px;height:20.10px;overflow:hidden"><div class="t" style="left:-14.25px;top:-2.40px;font-size:10.67px;color:#111;font-weight:bold;letter-spacing:-0.150px;">Rows {cCoun</div></div>
<div class="a" style="left:501.5px;top:581.4px;width:54.90px;height:20.10px;overflow:hidden"><div class="t" style="left:5.10px;top:9.60px;font-size:10.67px;color:#111;font-weight:bold;letter-spacing:-0.034px;">t(DBa_0)}</div></div>
<div class="t" style="left:559.70px;top:586.00px;font-size:10.67px;color:#111;font-weight:bold;letter-spacing:-0.087px;">/ {Count(DBa_0)}</div>
<div class="t" style="left:88.55px;top:333.00px;font-size:9px;color:#333;font-weight:bold;letter-spacing:0.849px;">Σ#</div>
<div class="a" style="left:501.0px;top:311px;width:129px;height:46px;overflow:hidden"><div class="t" style="left:-2.19px;top:2px;font-size:49px;font-weight:bold;color:#000;-webkit-text-stroke:0.8px #000;transform:scaleX(0.9823);transform-origin:0 0"><span style="display:inline-block;clip-path:inset(15px 0 0 0)">i</span>vant<span style="display:inline-block;clip-path:inset(15px 0 0 0)">i</span></div></div><svg style="left:0;top:0" width="1369" height="657" viewBox="0 0 1369 657"><path d="M501 314.200h7v7.700h-7zM616.200 310.700h12.700v11.300h-5.300v-6.300h-7.400zM616.200 317.400h4.900v4.600h-4.900z" fill="#da2a27"/></svg>
</body>
</html>
